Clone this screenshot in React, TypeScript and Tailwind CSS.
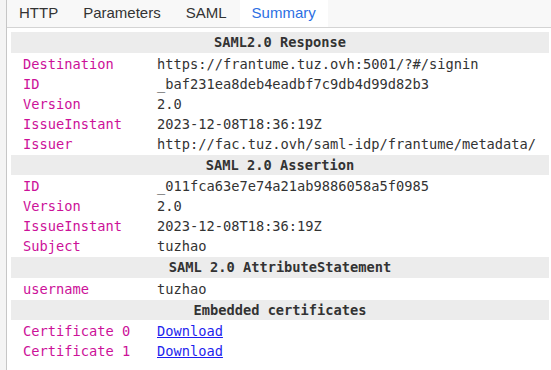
const tabs = ['HTTP', 'Parameters', 'SAML', 'Summary'];

type Row = { k: string; v: string; link?: boolean };
type Section = { title: string; rows: Row[] };

const sections: Section[] = [
  {
    title: 'SAML2.0 Response',
    rows: [
      { k: 'Destination', v: 'https://frantume.tuz.ovh:5001/?#/signin' },
      { k: 'ID', v: '_baf231ea8deb4eadbf7c9db4d99d82b3' },
      { k: 'Version', v: '2.0' },
      { k: 'IssueInstant', v: '2023-12-08T18:36:19Z' },
      { k: 'Issuer', v: 'http://fac.tuz.ovh/saml-idp/frantume/metadata/' },
    ],
  },
  {
    title: 'SAML 2.0 Assertion',
    rows: [
      { k: 'ID', v: '_011fca63e7e74a21ab9886058a5f0985' },
      { k: 'Version', v: '2.0' },
      { k: 'IssueInstant', v: '2023-12-08T18:36:19Z' },
      { k: 'Subject', v: 'tuzhao' },
    ],
  },
  {
    title: 'SAML 2.0 AttributeStatement',
    rows: [{ k: 'username', v: 'tuzhao' }],
  },
  {
    title: 'Embedded certificates',
    rows: [
      { k: 'Certificate 0', v: 'Download', link: true },
      { k: 'Certificate 1', v: 'Download', link: true },
    ],
  },
];

export default function App() {
  return (
    <div className="flex h-[370px] w-[551px] overflow-hidden bg-white">
      <div className="w-[6px] shrink-0 bg-[#f4f4f4]" />
      <div className="flex min-w-0 flex-1 flex-col border-l border-[#c6c6c6]">
        <div className="flex h-[28px] shrink-0 gap-px border-b border-[#d4d4d4] bg-[#f8f8f8] font-['Liberation_Sans',Arial,sans-serif] text-[15px]">
          {tabs.map((t) => (
            <div
              key={t}
              className={
                t === 'Summary'
                  ? 'flex items-center bg-white px-3 text-[#2c6fe3]'
                  : 'flex items-center px-3 text-[#333]'
              }
            >
              {t}
            </div>
          ))}
        </div>
        <div className="pl-[2px] pt-[2px]">
          <table className="w-full border-separate border-spacing-[2px] font-['DejaVu_Sans_Mono',monospace] text-[13.7px] leading-[18px]">
            <tbody>
              {sections.map((s) => (
                <>
                  <tr key={s.title}>
                    <th colSpan={2} className="h-[20.5px] bg-[#ececec] p-0 text-center font-bold text-[#333]">
                      {s.title}
                    </th>
                  </tr>
                  {s.rows.map((r, i) => (
                    <tr key={s.title + i}>
                      <td className="h-[18px] w-[142px] p-0 pl-3 text-[#cc1199]">{r.k}</td>
                      <td className="h-[18px] p-0 pl-[2px] text-[#333]">
                        {r.link ? (
                          <a href="#" className="text-[#1f1fee] underline">
                            {r.v}
                          </a>
                        ) : (
                          r.v
                        )}
                      </td>
                    </tr>
                  ))}
                </>
              ))}
            </tbody>
          </table>
        </div>
      </div>
    </div>
  );
}
